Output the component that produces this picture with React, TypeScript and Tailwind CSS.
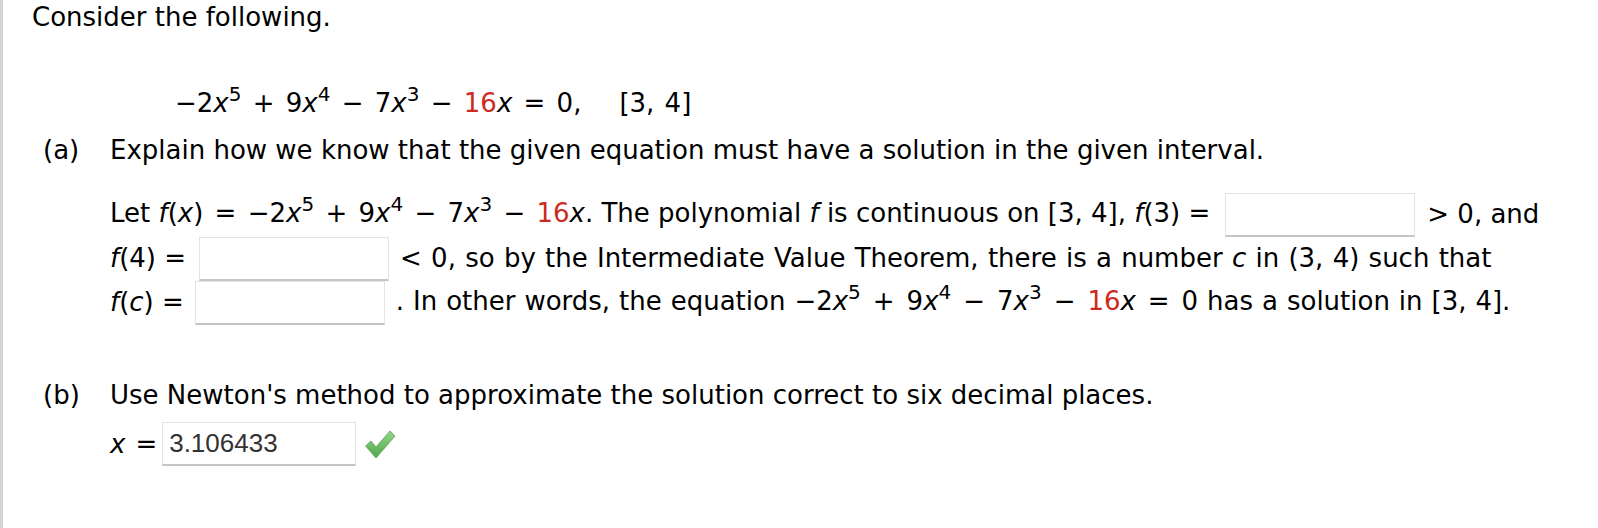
import React from "react";

const Sup = ({ children }: { children: React.ReactNode }) => (
  <span className="text-[20px] relative -top-[11px] not-italic">{children}</span>
);

const X = () => <span className="italic">x</span>;

const Op = ({ children }: { children: React.ReactNode }) => (
  <span className="mx-[3px]">{children}</span>
);

const Red = ({ children }: { children: React.ReactNode }) => (
  <span className="text-[#cc2a1e]">{children}</span>
);

const Box = ({ value, w = "w-[190px]" }: { value?: string; w?: string }) => (
  <span
    className={`inline-flex items-center align-middle h-[44px] ${w} bg-white border border-[#e4e4e4] border-b-[#c4c4c4] border-b-2 px-[6px] font-['Liberation_Sans',Arial,sans-serif] text-[26px] text-[#333]`}
  >
    {value}
  </span>
);

const Poly = () => (
  <>
    −2<X />
    <Sup>5</Sup> <Op>+</Op> 9<X />
    <Sup>4</Sup> <Op>−</Op> 7<X />
    <Sup>3</Sup> <Op>−</Op> <Red>16</Red>
    <X />
  </>
);

const Check = () => (
  <svg width="32" height="32" viewBox="0 0 32 32" className="inline-block">
    <defs>
      <linearGradient id="g" x1="0" y1="0" x2="0" y2="1">
        <stop offset="0" stopColor="#93d68b" />
        <stop offset="1" stopColor="#4ea94a" />
      </linearGradient>
    </defs>
    <path
      d="M1.5 18 L7 13 L12 19 L26 3 L31 8 L12 30 Z"
      fill="url(#g)"
      stroke="#5d9f57"
      strokeWidth="0.8"
      strokeLinejoin="round"
    />
  </svg>
);

export default function App() {
  return (
    <div className="min-h-[528px] bg-white border-l-[3px] border-[#d4d4d4] font-['DejaVu_Sans',Verdana,sans-serif] text-[26px] text-black pl-[29px] whitespace-nowrap">
      <div className="h-[34px] leading-[34px]">Consider the following.</div>

      <div className="mt-[52px] ml-[143px] h-[34px] leading-[34px]">
        <Poly /> <Op>=</Op> 0,
        <span className="ml-[38px] [word-spacing:2px]">[3, 4]</span>
      </div>

      <div className="mt-[13px] ml-[11px] h-[34px] leading-[34px] flex">
        <span className="w-[67px]">(a)</span>
        <span>Explain how we know that the given equation must have a solution in the given interval.</span>
      </div>

      <div className="mt-[25px] ml-[78px]">
        <div className="h-[44px] leading-[44px] flex items-center">
          <span>
            Let <span className="italic">f</span>(<X />) <Op>=</Op> <Poly />. The polynomial{" "}
            <span className="italic">f</span> is continuous on [3, 4], <span className="italic">f</span>(3) =
          </span>
          <span className="ml-[15px]">
            <Box />
          </span>
          <span className="ml-[12px]">&gt; 0, and</span>
        </div>
        <div className="h-[44px] leading-[44px] flex items-center">
          <span>
            <span className="italic">f</span>(4) =
          </span>
          <span className="ml-[13px]">
            <Box />
          </span>
          <span className="ml-[11px] [word-spacing:1px]">
            &lt; 0, so by the Intermediate Value Theorem, there is a number <span className="italic">c</span> in (3, 4) such that
          </span>
        </div>
        <div className="h-[44px] leading-[44px] flex items-center">
          <span>
            <span className="italic">f</span>(<span className="italic">c</span>) =
          </span>
          <span className="ml-[11px]">
            <Box />
          </span>
          <span className="ml-[11px] [word-spacing:0.7px]">
            . In other words, the equation <Poly /> <Op>=</Op> 0 has a solution in [3, 4].
          </span>
        </div>
      </div>

      <div className="mt-[54px] ml-[11px] h-[34px] leading-[34px] flex">
        <span className="w-[67px]">(b)</span>
        <span>Use Newton's method to approximate the solution correct to six decimal places.</span>
      </div>

      <div className="mt-[10px] ml-[78px] h-[44px] flex items-center">
        <span className="italic">x</span>
        <span className="ml-[10px]">=</span>
        <span className="ml-[5px]">
          <Box value="3.106433" w="w-[194px]" />
        </span>
        <span className="ml-[8px] flex items-center">
          <Check />
        </span>
      </div>
    </div>
  );
}
